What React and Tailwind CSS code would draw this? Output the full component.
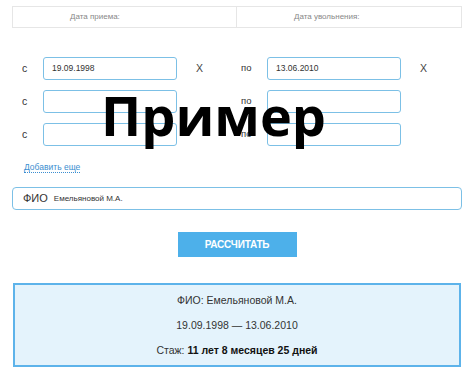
import React from "react";

const font = { fontFamily: "Tahoma, 'Liberation Sans', Arial, sans-serif" };

const DateRow = ({ from, to, remove }) => (
  <div className="flex items-center h-[23px]">
    <span className="w-[31px] pl-[22px] text-[10.5px] text-[#333]">с</span>
    <div className="ml-[12px] w-[134px] h-[23px] border border-[#7cc0e6] rounded-[3px] px-[8px] flex items-center text-[8.5px] text-[#333]">
      {from}
    </div>
    <span className="w-[46px] pl-[19px] text-[10.5px] text-[#444]">{remove ? "X" : ""}</span>
    <span className="w-[43px] pl-[18px] text-[9.5px] text-[#333]">по</span>
    <div className="ml-[1px] w-[134px] h-[23px] border border-[#7cc0e6] rounded-[3px] px-[8px] flex items-center text-[8.5px] text-[#333]">
      {to}
    </div>
    <span className="pl-[19px] text-[10.5px] text-[#444]">{remove ? "X" : ""}</span>
  </div>
);

export default function App() {
  return (
    <div className="relative w-[474px] h-[377px] bg-white overflow-hidden" style={font}>
      {/* Header */}
      <div className="pt-[6px] px-[12px]">
        <div className="flex h-[22px] border border-[#e6e6e6]">
          <div className="w-[224px] border-r border-[#e6e6e6] flex items-center pl-[57px] text-[8px] text-[#888]">
            Дата приема:
          </div>
          <div className="flex-1 flex items-center pl-[57px] text-[8px] text-[#888]">
            Дата увольнения:
          </div>
        </div>
      </div>

      {/* Dates */}
      <div className="mt-[29px] flex flex-col gap-[10px]">
        <DateRow from="19.09.1998" to="13.06.2010" remove />
        <DateRow from="" to="" />
        <DateRow from="" to="" />
      </div>

      <div className="mt-[13px] pl-[24px] leading-[11px]">
        <a className="text-[8.5px] text-[#3b8ed0] border-b border-dotted border-[#3b8ed0]">
          Добавить еще
        </a>
      </div>

      {/* FIO */}
      <div className="mt-[14px] mx-[12px] h-[23px] border border-[#7cc0e6] rounded-[4px] flex items-center pl-[10px]">
        <span className="text-[11px] text-[#333]">ФИО</span>
        <span className="ml-[6px] text-[8px] text-[#333]">Емельяновой М.А.</span>
      </div>

      <div className="mt-[22px] flex justify-center">
        <button className="w-[119px] h-[25px] bg-[#4db0ea] text-white text-[10px] font-bold tracking-[-0.2px]">
          РАССЧИТАТЬ
        </button>
      </div>

      {/* Result */}
      <div className="mt-[26px] mx-[13px] h-[84px] border-2 border-[#5db3ea] bg-[#e4f3fc] flex flex-col items-center justify-center gap-[11px] text-[10.5px] text-[#333] leading-[14px]">
        <div>ФИО: Емельяновой М.А.</div>
        <div>19.09.1998 — 13.06.2010</div>
        <div>
          Стаж: <b className="text-[#111]">11 лет 8 месяцев 25 дней</b>
        </div>
      </div>

      {/* Watermark */}
      <div
        className="absolute left-[101px] top-[88px] text-[54px] font-bold text-black leading-none"
        style={{ fontFamily: "'Open Sans', 'DejaVu Sans', sans-serif" }}
      >
        Пример
      </div>
    </div>
  );
}
